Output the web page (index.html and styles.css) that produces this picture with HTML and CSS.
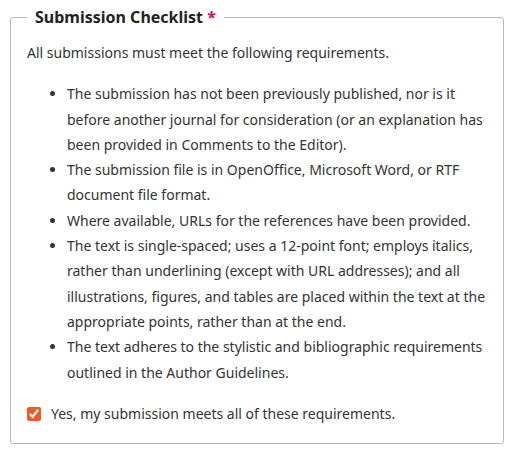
FILE: index.html
```html
<!DOCTYPE html>
<html lang="en">
<head>
<meta charset="utf-8">
<title>Submission Checklist</title>
<link rel="stylesheet" href="styles.css">
</head>
<body>
<fieldset class="checklist">
  <legend class="checklist-legend">Submission Checklist <span class="required">*</span></legend>
  <p class="intro">All submissions must meet the following requirements.</p>
  <ul class="items">
    <li>The submission has not been previously published, nor is it before another journal for consideration (or an explanation has been provided in Comments to the Editor).</li>
    <li>The submission file is in OpenOffice, Microsoft Word, or RTF document file format.</li>
    <li>Where available, URLs for the references have been provided.</li>
    <li>The text is single-spaced; uses a 12-point font; employs italics, rather than underlining (except with URL addresses); and all illustrations, figures, and tables are placed within the text at the appropriate points, rather than at the end.</li>
    <li>The text adheres to the stylistic and bibliographic requirements outlined in the Author Guidelines.</li>
  </ul>
  <label class="confirm">
    <input type="checkbox" class="confirm-box" checked>
    <span>Yes, my submission meets all of these requirements.</span>
  </label>
</fieldset>
</body>
</html>
```

FILE: styles.css
```css
html, body {
  margin: 0;
  background: #fff;
}
body {
  padding: 0 11px 0 10px;
  font-family: "Noto Sans", "Open Sans", sans-serif;
  font-size: 14px;
  line-height: 25.3px;
  color: #333;
}
.checklist {
  margin: 5px 0 0;
  padding: 11px 16px 17px;
  border: 1px solid #bbb;
  border-radius: 3px;
  min-width: 0;
}
.checklist-legend {
  padding: 0 8px;
  font-size: 16px;
  font-weight: 700;
  line-height: 24px;
  color: #222;
}
.required {
  color: #d00a6c;
}
.intro {
  margin: 0 0 16px;
}
.items {
  margin: 0 0 16px;
  padding-left: 40px;
}
.confirm {
  display: flex;
  align-items: center;
}
.confirm-box {
  width: 14px;
  height: 14px;
  margin: 0 10px 0 0;
  accent-color: #f05a24;
  flex: none;
}
```
